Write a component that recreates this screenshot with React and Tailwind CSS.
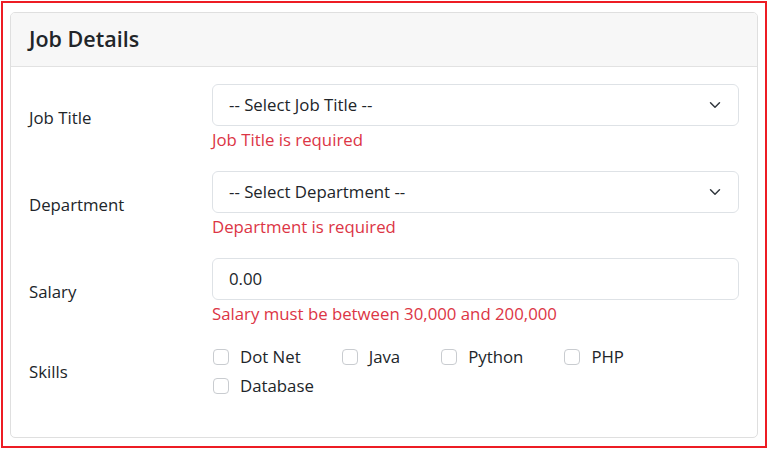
import { useState } from "react";

const Chevron = () => (
    <svg className="w-4 h-3 text-[#343a40]" viewBox="0 0 16 16" fill="none">
        <path d="m2 5 6 6 6-6" stroke="currentColor" strokeWidth="2" strokeLinecap="round" strokeLinejoin="round" />
    </svg>
);

const FieldRow = ({ label, children, error }) => (
    <div className="flex items-center mb-[19px]">
        <label className="w-[183px] shrink-0">{label}</label>
        <div className="w-[527px]">
            {children}
            {error && <div className="mt-0.5 text-[#dc3545] leading-6">{error}</div>}
        </div>
    </div>
);

const SelectBox = ({ placeholder }) => (
    <div className="h-[42px] border border-[#dee2e6] rounded-md bg-white flex items-center justify-between pl-4 pr-[15px]">
        <span>{placeholder}</span>
        <Chevron />
    </div>
);

const App = () => {
    const [skills, setSkills] = useState({});
    const skillList = ["Dot Net", "Java", "Python", "PHP", "Database"];

    const toggle = (name) => {
        setSkills({ ...skills, [name]: !skills[name] });
    };

    return (
        <div className="w-[768px] h-[449px] bg-white p-px" style={{ fontFamily: '"Open Sans", "Noto Sans", sans-serif' }}>
            <div className="h-full border-2 border-[#ed1c24] pt-[9px] px-[7px]">
                <div className="border border-[#dfdfdf] rounded-[5px] overflow-hidden text-[#212529] text-[16.8px]">
                    <div className="h-[54px] bg-[#f7f7f7] border-b border-[#e2e2e2] flex items-center px-[18px]">
                        <h5 className="text-[21.5px] font-semibold">Job Details</h5>
                    </div>
                    <div className="pt-[17px] pl-[18px] pr-4 pb-[39px]">
                        <FieldRow label="Job Title" error="Job Title is required">
                            <SelectBox placeholder="-- Select Job Title --" />
                        </FieldRow>
                        <FieldRow label="Department" error="Department is required">
                            <SelectBox placeholder="-- Select Department --" />
                        </FieldRow>
                        <FieldRow label="Salary" error="Salary must be between 30,000 and 200,000">
                            <div className="h-[42px] border border-[#dee2e6] rounded-md bg-white flex items-center px-4">
                                0.00
                            </div>
                        </FieldRow>
                        <div className="flex items-center">
                            <label className="w-[183px] shrink-0">Skills</label>
                            <div className="w-[527px] flex flex-wrap gap-x-10 gap-y-[5px]">
                                {skillList.map((s) => (
                                    <label key={s} className="flex items-center gap-[11px] leading-6 cursor-pointer">
                                        <span
                                            onClick={() => toggle(s)}
                                            className={`w-4 h-4 ml-px rounded border border-[#c9ccd0] ${skills[s] ? "bg-[#0d6efd]" : "bg-white"}`}
                                        ></span>
                                        {s}
                                    </label>
                                ))}
                            </div>
                        </div>
                    </div>
                </div>
            </div>
        </div>
    );
};

export default App;
